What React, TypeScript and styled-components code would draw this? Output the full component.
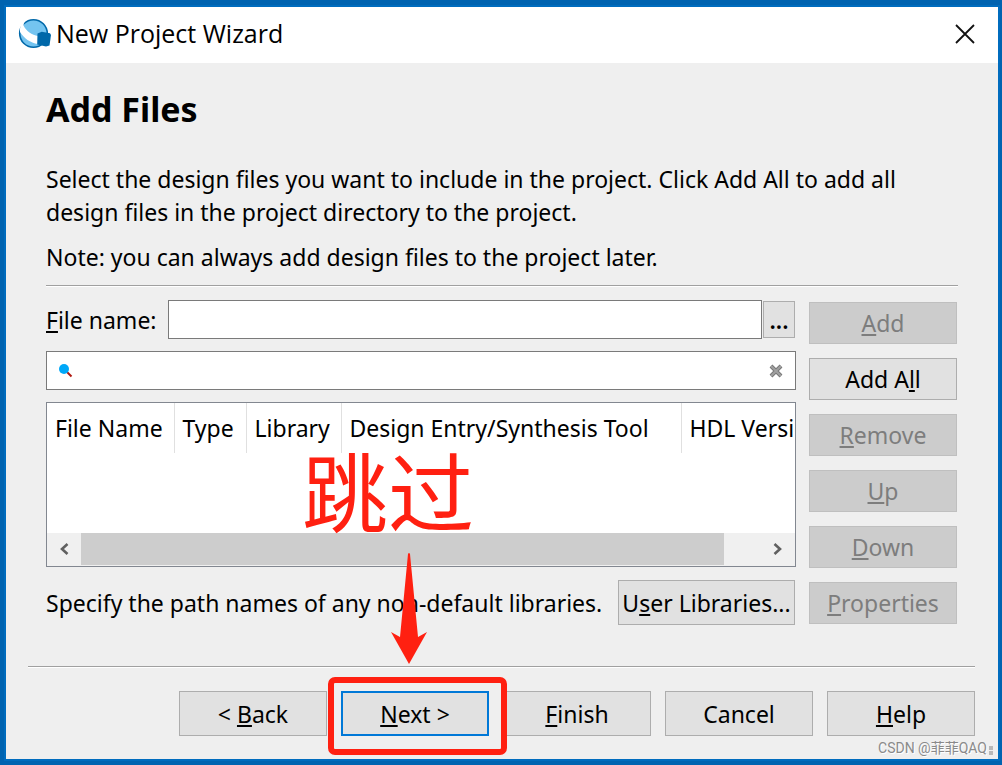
import React from "react";
import styled, { createGlobalStyle } from "styled-components";

const GlobalStyle = createGlobalStyle`
  *, *::before, *::after { box-sizing: border-box; }
  body { margin: 0; }
  body, button, input { font-family: "Noto Sans", "Noto Sans CJK SC", sans-serif; font-size: 23px; color: #000; }
`;

const Desktop = styled.div`
  position: relative;
  min-height: 100vh;
  display: flex;
  padding: 7px 4px 6px 6px;
  background: #0063b0;
`;

const Dialog = styled.section`
  flex: 1;
  min-width: 0;
  display: flex;
  flex-direction: column;
  background: #efefef;
  box-shadow: 0 0 0 2px #006cbe;
`;

const TitleBar = styled.header`
  height: 56px;
  padding: 0 23px 2px 12px;
  display: flex;
  align-items: center;
  gap: 4px;
  background: #fff;
`;

const WindowTitle = styled.span`
  flex: 1;
  padding-bottom: 2px;
  font-family: "Open Sans", sans-serif;
  font-size: 25px;
  line-height: 32px;
`;

const IconButton = styled.button`
  display: flex;
  padding: 0;
  border: 0;
  background: transparent;
`;

const Page = styled.main`
  padding: 26px 40px 0;
  display: flex;
  flex-direction: column;
`;

const Heading = styled.h1`
  margin: 0 0 34px;
  font-size: 34px;
  line-height: 40px;
  font-weight: 700;
`;

const Intro = styled.div`
  margin-bottom: 11px;
  display: flex;
  flex-direction: column;
  gap: 12px;
`;

const Paragraph = styled.p`
  margin: 0;
  line-height: 33px;
`;

const Rule = styled.hr`
  width: 100%;
  height: 2px;
  margin: 0;
  border: 0;
  border-top: 1px solid #a0a0a0;
  border-bottom: 1px solid #fff;
`;

const Columns = styled.div`
  margin-top: 13px;
  display: flex;
  gap: 13px;
`;

const FilesColumn = styled.div`
  flex: 1;
  min-width: 0;
  display: flex;
  flex-direction: column;
  gap: 12px;
`;

const SideButtons = styled.div`
  width: 149px;
  padding: 2px 1px 0 0;
  display: flex;
  flex-direction: column;
  gap: 14px;
`;

const FileNameRow = styled.div`
  display: flex;
  align-items: center;
  gap: 1px;
  padding-right: 1px;
`;

const FieldLabel = styled.label`
  width: 121px;
  white-space: nowrap;
`;

const TextInput = styled.input`
  flex: 1;
  min-width: 0;
  height: 39px;
  padding: 0 8px;
  border: 1px solid #7a7a7a;
  background: #fff;
  outline: none;
`;

const SearchBox = styled.div`
  height: 39px;
  padding: 0 12px 0 11px;
  display: flex;
  align-items: center;
  gap: 8px;
  border: 1px solid #7a7a7a;
  background: #fff;
`;

const SearchInput = styled.input`
  flex: 1;
  min-width: 0;
  border: 0;
  outline: none;
  background: transparent;
`;

const Button = styled.button<{ $width?: number; $height?: number; $primary?: boolean; $bold?: boolean }>`
  width: ${(p) => p.$width ?? 148}px;
  height: ${(p) => p.$height ?? 42}px;
  flex: none;
  padding: 0;
  border: ${(p) => (p.$primary ? "2px solid #0078d7" : "1px solid #adadad")};
  background: #e1e1e1;
  white-space: nowrap;
  line-height: 32px;
  font-weight: ${(p) => (p.$bold ? 600 : 400)};

  &:disabled {
    border-color: #bfbfbf;
    background: #cccccc;
    color: #7d7d7d;
  }
`;

const Key = styled.span`
  text-decoration: underline;
  text-decoration-thickness: 2px;
  text-underline-offset: 2px;
  text-decoration-skip-ink: none;
`;

const TableFrame = styled.div`
  height: 165px;
  display: flex;
  flex-direction: column;
  border: 1px solid #828790;
  background: #fff;
`;

const TableViewport = styled.div`
  flex: 1;
  overflow: hidden;
`;

const FileTable = styled.table`
  width: 840px;
  table-layout: fixed;
  border-collapse: collapse;
`;

const HeaderCell = styled.th<{ $width?: number }>`
  width: ${(p) => (p.$width ? `${p.$width}px` : "auto")};
  height: 50px;
  padding: 0 0 0 8px;
  border-right: 1px solid #e0e0e0;
  font-weight: 400;
  text-align: left;
  white-space: nowrap;
`;

const ScrollBar = styled.div`
  height: 33px;
  display: flex;
  padding-bottom: 1px;
  background: #f0f0f0;
`;

const ScrollArrow = styled.button`
  width: 34px;
  padding: 0;
  display: flex;
  align-items: center;
  justify-content: center;
  border: 0;
  background: transparent;
`;

const ScrollTrack = styled.div`
  flex: 1;
  display: flex;
`;

const ScrollThumb = styled.div`
  width: calc(100% - 37px);
  background: #cdcdcd;
`;

const LibrariesRow = styled.div`
  margin-top: 1px;
  padding-right: 1px;
  display: flex;
  align-items: center;
  justify-content: space-between;
  white-space: nowrap;
`;

const Footer = styled.footer`
  margin-top: 41px;
  padding: 0 23px 23px 22px;
`;

const FooterButtons = styled.div`
  margin-top: 23px;
  display: flex;
  justify-content: flex-end;
  gap: 14px;
`;

const Marked = styled.div`
  position: relative;
`;

const MarkFrame = styled.div`
  position: absolute;
  inset: -14px -18px -19px -13px;
  border: 6px solid #ff2011;
  border-radius: 7px;
  pointer-events: none;
`;

const MarkText = styled.div`
  position: absolute;
  left: -39px;
  bottom: 197px;
  font-family: "Noto Sans CJK SC", sans-serif;
  font-size: 86px;
  line-height: 100px;
  white-space: nowrap;
  color: #ff2011;
  pointer-events: none;
`;

const MarkArrow = styled.svg`
  position: absolute;
  left: 50px;
  bottom: 72px;
  pointer-events: none;
`;

const Watermark = styled.div`
  position: absolute;
  right: 15px;
  bottom: 7px;
  font-family: Roboto, "Noto Sans CJK SC", sans-serif;
  font-size: 14px;
  line-height: 20px;
  color: #8a8a8a;
  text-shadow: 1px 1px 0 #fff;
`;

const SizeGrip = styled.svg`
  position: absolute;
  right: 9px;
  bottom: 10px;
`;

const columns = [
  { name: "File Name", width: 127 },
  { name: "Type", width: 72 },
  { name: "Library", width: 95 },
  { name: "Design Entry/Synthesis Tool", width: 340 },
  { name: "HDL Version" },
];

export default function App() {
  return (
    <>
      <GlobalStyle />
      <Desktop>
        <Dialog>
          <TitleBar>
            <svg width="34" height="34" viewBox="0 0 34 34">
              <circle cx="15.5" cy="16.500" r="13.800" fill="#74c4f0" stroke="#0068a9" strokeWidth="1.600" />
              <path d="M9 2.500C4 4 1.500 9 2 15C6 21 12 26 20 27L20 19C14 18 8 14 5.500 8.500C5.500 6 7 4 9 2.500Z" fill="#fff" />
              <path d="M19.500 16.500L23.700 14.800L32 16.300L33 18L31.500 28.500L28 29.500L19.200 27.500Z" fill="#0068a9" />
            </svg>
            <WindowTitle>New Project Wizard</WindowTitle>
            <IconButton aria-label="Close">
              <svg width="20" height="20" viewBox="0 0 20 20">
                <path d="M1 1L19 19M19 1L1 19" stroke="#111" strokeWidth="1.800" />
              </svg>
            </IconButton>
          </TitleBar>
          <Page>
            <Heading>Add Files</Heading>
            <Intro>
              <Paragraph>
                Select the design files you want to include in the project. Click Add All to add all design files in the
                project directory to the project.
              </Paragraph>
              <Paragraph>Note: you can always add design files to the project later.</Paragraph>
            </Intro>
            <Rule />
            <Columns>
              <FilesColumn>
                <FileNameRow>
                  <FieldLabel htmlFor="file-name">
                    <Key>F</Key>ile name:
                  </FieldLabel>
                  <TextInput id="file-name" />
                  <Button $width={32} $height={37} $bold aria-label="Browse">
                    ...
                  </Button>
                </FileNameRow>
                <SearchBox>
                  <svg width="15" height="15" viewBox="0 0 15 15">
                    <path d="M8.500 8.500L13.500 13.500" stroke="#b01810" strokeWidth="2" />
                    <circle cx="6" cy="6" r="5" fill="#00a8f8" />
                  </svg>
                  <SearchInput aria-label="Filter files" />
                  <IconButton aria-label="Clear filter">
                    <svg width="14" height="14" viewBox="0 0 14 14">
                      <path d="M2 2L12 12M12 2L2 12" stroke="#777" strokeWidth="4" />
                      <path d="M2 2L12 12M12 2L2 12" stroke="#a0a0a0" strokeWidth="2" />
                    </svg>
                  </IconButton>
                </SearchBox>
                <TableFrame>
                  <TableViewport>
                    <FileTable>
                      <thead>
                        <tr>
                          {columns.map((c) => (
                            <HeaderCell key={c.name} $width={c.width}>
                              {c.name}
                            </HeaderCell>
                          ))}
                        </tr>
                      </thead>
                      <tbody />
                    </FileTable>
                  </TableViewport>
                  <ScrollBar>
                    <ScrollArrow aria-label="Scroll left">
                      <svg width="10" height="12" viewBox="0 0 10 12">
                        <path d="M8.500 1L3 6L8.500 11" fill="none" stroke="#606060" strokeWidth="2.600" />
                      </svg>
                    </ScrollArrow>
                    <ScrollTrack>
                      <ScrollThumb />
                    </ScrollTrack>
                    <ScrollArrow aria-label="Scroll right">
                      <svg width="10" height="12" viewBox="0 0 10 12">
                        <path d="M1.500 1L7 6L1.500 11" fill="none" stroke="#606060" strokeWidth="2.600" />
                      </svg>
                    </ScrollArrow>
                  </ScrollBar>
                </TableFrame>
                <LibrariesRow>
                  <span>Specify the path names of any non-default libraries.</span>
                  <Button $width={177} $height={45}>
                    U<Key>s</Key>er Libraries...
                  </Button>
                </LibrariesRow>
              </FilesColumn>
              <SideButtons>
                <Button disabled>
                  <Key>A</Key>dd
                </Button>
                <Button>
                  Add A<Key>l</Key>l
                </Button>
                <Button disabled>
                  <Key>R</Key>emove
                </Button>
                <Button disabled>
                  <Key>U</Key>p
                </Button>
                <Button disabled>
                  <Key>D</Key>own
                </Button>
                <Button disabled>
                  <Key>P</Key>roperties
                </Button>
              </SideButtons>
            </Columns>
          </Page>
          <Footer>
            <Rule />
            <FooterButtons>
              <Button $height={45}>
                &lt; <Key>B</Key>ack
              </Button>
              <Marked>
                <Button $height={45} $primary>
                  <Key>N</Key>ext &gt;
                </Button>
                <MarkFrame />
                <MarkText>跳过</MarkText>
                <MarkArrow width="36" height="111" viewBox="0 0 36 111">
                  <path d="M17 1Q18 -1 19 1L27 84L36 79L18 111L0 79L9 84Z" fill="#ff2011" />
                </MarkArrow>
              </Marked>
              <Button $height={45}>
                <Key>F</Key>inish
              </Button>
              <Button $height={45}>Cancel</Button>
              <Button $height={45}>
                <Key>H</Key>elp
              </Button>
            </FooterButtons>
          </Footer>
        </Dialog>
        <Watermark>CSDN @菲菲QAQ</Watermark>
        <SizeGrip width="4" height="9" viewBox="0 0 4 9">
          <path d="M0 0h4v4h-4zM0 5h4v4h-4z" fill="#b8b8b8" />
        </SizeGrip>
      </Desktop>
    </>
  );
}
